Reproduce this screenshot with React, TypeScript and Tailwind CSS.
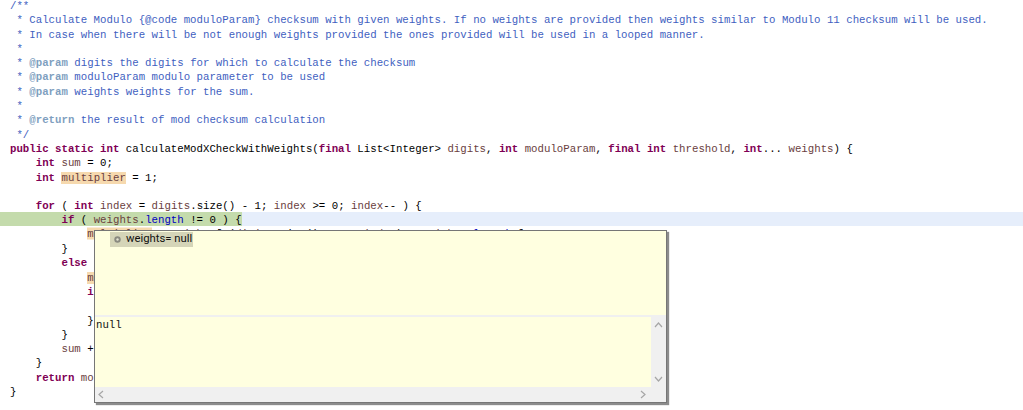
type Seg = [string, string?];
const K = "font-bold text-[#7f0055]";
const V = "text-[#6a3e3e]";
const C = "text-[#3f5fbf]";
const T = "font-bold text-[#7f9fbf]";
const F = "text-[#0000c0]";
const M = "bg-[#f6d9ae]";

const lines: Seg[][] = [
  [["/**", C]],
  [[" * Calculate Modulo {@code moduloParam} checksum with given weights. If no weights are provided then weights similar to Modulo 11 checksum will be used.", C]],
  [[" * In case when there will be not enough weights provided the ones provided will be used in a looped manner.", C]],
  [[" *", C]],
  [[" * ", C], ["@param", T], [" digits the digits for which to calculate the checksum", C]],
  [[" * ", C], ["@param", T], [" moduloParam modulo parameter to be used", C]],
  [[" * ", C], ["@param", T], [" weights weights for the sum.", C]],
  [[" *", C]],
  [[" * ", C], ["@return", T], [" the result of mod checksum calculation", C]],
  [[" */", C]],
  [["public static int", K], [" calculateModXCheckWithWeights("], ["final", K], [" List<Integer> "], ["digits", V], [", "], ["int", K], [" "], ["moduloParam", V], [", "], ["final int", K], [" "], ["threshold", V], [", "], ["int", K], ["... "], ["weights", V], [") {"]],
  [["    "], ["int", K], [" "], ["sum", V], [" = 0;"]],
  [["    "], ["int", K], [" "], ["multiplier", `${V} ${M}`], [" = 1;"]],
  [[" "]],
  [["    "], ["for", K], [" ( "], ["int", K], [" "], ["index", V], [" = "], ["digits", V], [".size() - 1; "], ["index", V], [" >= 0; "], ["index", V], ["-- ) {"]],
  [["        "], ["if", K], [" ( "], ["weights", V], ["."], ["length", F], [" != 0 ) {"]],
  [["            "], ["multiplier", `${V} ${M}`], [" = "], ["weights", V], ["[ ("], ["digits", V], [".size() - 1 - "], ["index", V], [") % "], ["weights", V], ["."], ["length", F], [" ];"]],
  [["        }"]],
  [["        "], ["else", K]],
  [["            "], ["m", `${V} ${M}`]],
  [["            "], ["i", K]],
  [[" "]],
  [["            }"]],
  [["        }"]],
  [["        "], ["sum", V], [" +"]],
  [["    }"]],
  [["    "], ["return", K], [" "], ["mo", V]],
  [["}"]],
];

export default function App() {
  return (
    <div className="relative h-[410px] w-[1023px] overflow-hidden bg-white font-['Liberation_Mono',monospace] text-[10.72px] leading-[14.3px] text-black">
      <div className="mt-[-1px] flex flex-col">
        {lines.map((line, i) => (
          <div
            key={i}
            className={
              i === 15
                ? "mt-[-1px] h-[15.3px] whitespace-pre bg-[linear-gradient(to_right,#c4dbac_242px,#e6eefb_242px)] bg-[length:100%_14px] bg-no-repeat pl-[10px] pt-[1px]"
                : i === 16
                  ? "h-[14.3px] -translate-y-[1.5px] whitespace-pre pl-[10px]"
                  : "h-[14.3px] whitespace-pre pl-[10px]"
            }
          >
            {line.map(([text, cls], j) => (
              <span key={j} className={cls}>
                {text}
              </span>
            ))}
          </div>
        ))}
      </div>

      <div className="absolute left-[94px] top-[230px] flex h-[173px] w-[573px] flex-col border border-[#767676] bg-[#ffffe0] shadow-[2px_2px_1px_rgba(0,0,0,0.45)]">
        <div className="h-[84px] pl-[15px] pt-[1px]">
          <div className="flex h-[15px] w-[83px] items-center gap-[5px] bg-[#d5d5b8] pl-[4px] font-['Roboto',sans-serif] text-[11.3px] text-[#111]">
            <svg width="7" height="7" viewBox="0 0 7 7" className="shrink-0">
              <circle cx="3.5" cy="3.5" r="3.2" fill="#8a8a80" />
              <circle cx="3.5" cy="3.5" r="1.2" fill="#e4e4d0" />
            </svg>
            <span className="whitespace-pre">weights= null</span>
          </div>
        </div>
        <div className="h-[2px] bg-[#f0f0f0]" />
        <div className="flex min-h-0 flex-1">
          <div className="flex flex-1 flex-col">
            <div className="flex-1 pl-[1px] pt-[1px] text-[#111]">null</div>
            <div className="flex h-[15px] items-center justify-between bg-[#f0f0f0] pl-[3px] pr-[5px]">
              <svg width="6" height="9" viewBox="0 0 6 9" fill="none" stroke="#a6a6a6" strokeWidth="1.2">
                <path d="M5 1 1 4.5 5 8" />
              </svg>
              <svg width="6" height="9" viewBox="0 0 6 9" fill="none" stroke="#a6a6a6" strokeWidth="1.2">
                <path d="M1 1 5 4.5 1 8" />
              </svg>
            </div>
          </div>
          <div className="flex w-[15px] flex-col items-center justify-between bg-[#f0f0f0] pb-[20px] pt-[5px]">
            <svg width="9" height="6" viewBox="0 0 9 6" fill="none" stroke="#a6a6a6" strokeWidth="1.2">
              <path d="M1 5 4.5 1 8 5" />
            </svg>
            <svg width="9" height="6" viewBox="0 0 9 6" fill="none" stroke="#a6a6a6" strokeWidth="1.2">
              <path d="M1 1 4.5 5 8 1" />
            </svg>
          </div>
        </div>
      </div>
    </div>
  );
}
